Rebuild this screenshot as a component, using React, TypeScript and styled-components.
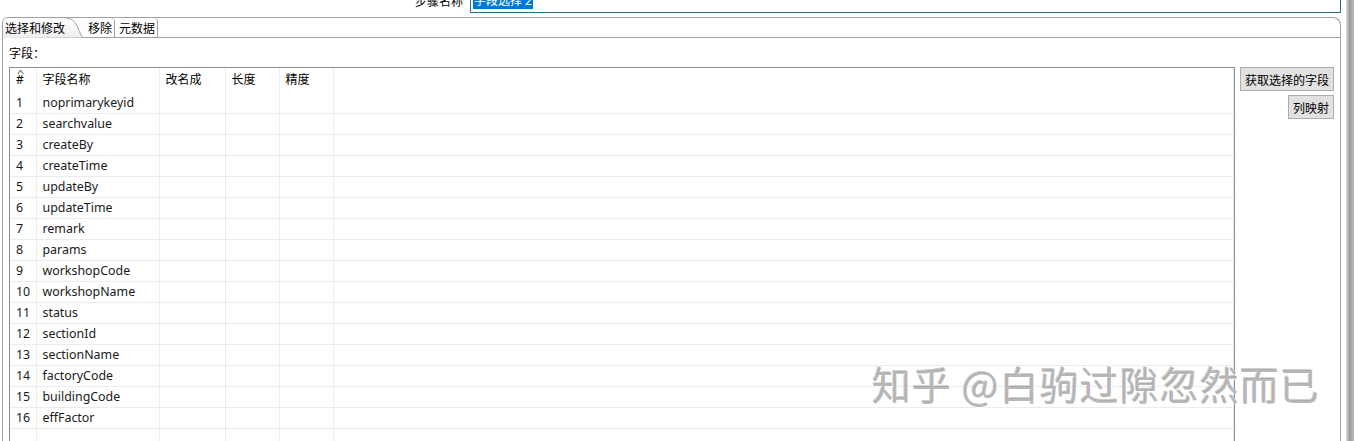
import React from "react";
import styled, { createGlobalStyle } from "styled-components";

const fields = [
  "noprimarykeyid",
  "searchvalue",
  "createBy",
  "createTime",
  "updateBy",
  "updateTime",
  "remark",
  "params",
  "workshopCode",
  "workshopName",
  "status",
  "sectionId",
  "sectionName",
  "factoryCode",
  "buildingCode",
  "effFactor",
];

const columns = [
  { title: "#", w: 26 },
  { title: "字段名称", w: 123 },
  { title: "改名成", w: 66 },
  { title: "长度", w: 54 },
  { title: "精度", w: 54 },
];

const GlobalStyle = createGlobalStyle`
  html, body {
    margin: 0;
    padding: 0;
    background: #ffffff;
  }
  body {
    font-family: "Noto Sans", "Noto Sans CJK SC", sans-serif;
    font-size: 12px;
    color: #000000;
  }
`;

const Page = styled.div`
  position: relative;
  width: 1354px;
  height: 441px;
  overflow: hidden;
  display: flex;
  background: #ffffff;
`;

const Main = styled.div`
  flex: 1;
  display: flex;
  flex-direction: column;
  padding: 0 5px 0 2px;
`;

const EdgeStrip = styled.div`
  width: 8px;
  background: linear-gradient(to right, #e0e0e0, #9a9a9a 45%, #bdbdbd);
`;

const StepRow = styled.div`
  height: 13px;
  display: flex;
  align-items: flex-end;
  overflow: hidden;
  padding-left: 413px;
`;

const StepLabel = styled.span`
  width: 55px;
  line-height: 18px;
  margin-bottom: 2px;
  color: #000;
`;

const StepInput = styled.div`
  flex: 1;
  height: 22px;
  border: 1px solid #2f6f86;
  display: flex;
  align-items: center;
  padding-left: 2px;
`;

const Selected = styled.span`
  background: #0078d7;
  color: #ffffff;
  line-height: 16px;
  padding: 0 1px;
`;

const TabPanel = styled.div`
  margin-top: 4px;
  flex: 1;
  display: flex;
  flex-direction: column;
  border: 1px solid #a0a0a0;
  border-bottom: none;
  border-radius: 6px 8px 0 0;
  overflow: hidden;
`;

const TabBar = styled.div`
  height: 19px;
  display: flex;
  align-items: flex-end;
  border-bottom: 1px solid #a0a0a0;
`;

const ActiveTab = styled.div`
  position: relative;
  height: 19px;
  width: 80px;
  display: flex;
  align-items: center;
  & > svg {
    position: absolute;
    left: 0;
    top: 0;
  }
  & > span {
    position: relative;
    padding-left: 2px;
  }
`;

const Tab = styled.div<{ $first?: boolean }>`
  height: 19px;
  display: flex;
  align-items: center;
  padding: 0 2px 0 ${(p) => (p.$first ? "5px" : "4px")};
  border-right: 1px solid #a0a0a0;
  border-top-right-radius: 4px;
`;

const Content = styled.div`
  flex: 1;
  display: flex;
  flex-direction: column;
  padding: 8px 6px 0 6px;
`;

const FieldLabel = styled.div`
  height: 16px;
  line-height: 16px;
  margin-bottom: 5px;
`;

const Body = styled.div`
  flex: 1;
  display: flex;
  gap: 5px;
`;

const GridWrap = styled.div`
  flex: 1;
  border: 1px solid #8c8c8c;
  border-bottom: none;
  overflow: hidden;
`;

const Grid = styled.table`
  width: 100%;
  border-collapse: collapse;
  table-layout: fixed;
`;

const HeadCell = styled.th`
  box-sizing: border-box;
  height: 25px;
  padding: 4px 0 0 6px;
  text-align: left;
  font-weight: normal;
  vertical-align: top;
  line-height: 16px;
  border-right: 1px solid #ececec;
  position: relative;
`;

const SortMark = styled.span`
  position: absolute;
  left: 8px;
  top: 0;
  font-size: 9px;
  line-height: 9px;
  color: #444;
  transform: scaleX(1.4);
`;

const Row = styled.tr`
  height: 20px;
  border-bottom: 1px solid #ececec;
`;

const Cell = styled.td`
  padding: 0 0 0 6px;
  border-right: 1px solid #ececec;
  white-space: nowrap;
  overflow: hidden;
  font-size: 12.4px;
  line-height: 20px;
  color: #1a1a1a;
`;

const Side = styled.div`
  width: 94px;
  display: flex;
  flex-direction: column;
  align-items: flex-end;
  gap: 4px;
`;

const Button = styled.button`
  height: 24px;
  padding: 0 4px;
  font-family: "Noto Sans CJK SC", sans-serif;
  font-size: 12px;
  color: #000;
  background: #e1e1e1;
  border: 1px solid #adadad;
  border-radius: 0;
`;

const Watermark = styled.div`
  position: absolute;
  left: 872px;
  top: 355px;
  font-family: "Noto Sans CJK SC", sans-serif;
  font-size: 39px;
  letter-spacing: 1px;
  color: rgba(165, 165, 165, 0.8);
  text-shadow: 1px 1px 0 #ffffff, -1px -1px 0 rgba(120, 120, 120, 0.35);
  pointer-events: none;
`;

function TabShape() {
  return (
    <svg width="80" height="20" viewBox="0 0 80 20">
      <defs>
        <linearGradient id="tabfill" x1="0" y1="0" x2="0" y2="1">
          <stop offset="0" stopColor="#ffffff" />
          <stop offset="1" stopColor="#eeeeee" />
        </linearGradient>
      </defs>
      <path
        d="M0 20 L0 0 L64 0 C70 0 72 4 75 10 C77 15 78 18 80 19.5"
        fill="url(#tabfill)"
        stroke="none"
      />
      <path
        d="M64 0.5 C70 0.5 72 4 75 10 C77 15 78 18 80 19.5"
        fill="none"
        stroke="#a0a0a0"
        strokeWidth="1"
      />
    </svg>
  );
}

export default function App() {
  const rows = [...fields.map((f, i) => ({ n: String(i + 1), f })), { n: "", f: "" }];
  return (
    <Page>
      <GlobalStyle />
      <Main>
        <StepRow>
          <StepLabel>步骤名称</StepLabel>
          <StepInput>
            <Selected>字段选择 2</Selected>
          </StepInput>
        </StepRow>
        <TabPanel>
          <TabBar>
            <ActiveTab>
              <TabShape />
              <span>选择和修改</span>
            </ActiveTab>
            <Tab $first>移除</Tab>
            <Tab>元数据</Tab>
          </TabBar>
          <Content>
            <FieldLabel>字段：</FieldLabel>
            <Body>
              <GridWrap>
                <Grid>
                  <colgroup>
                    {columns.map((c) => (
                      <col key={c.title} style={{ width: c.w }} />
                    ))}
                    <col />
                  </colgroup>
                  <thead>
                    <tr>
                      {columns.map((c, i) => (
                        <HeadCell key={c.title}>
                          {i === 0 && <SortMark>^</SortMark>}
                          {c.title}
                        </HeadCell>
                      ))}
                      <HeadCell />
                    </tr>
                  </thead>
                  <tbody>
                    {rows.map((r, i) => (
                      <Row key={i}>
                        <Cell>{r.n}</Cell>
                        <Cell>{r.f}</Cell>
                        <Cell />
                        <Cell />
                        <Cell />
                        <Cell />
                      </Row>
                    ))}
                  </tbody>
                </Grid>
              </GridWrap>
              <Side>
                <Button>获取选择的字段</Button>
                <Button>列映射</Button>
              </Side>
            </Body>
          </Content>
        </TabPanel>
      </Main>
      <EdgeStrip />
      <Watermark>知乎 @白驹过隙忽然而已</Watermark>
    </Page>
  );
}
